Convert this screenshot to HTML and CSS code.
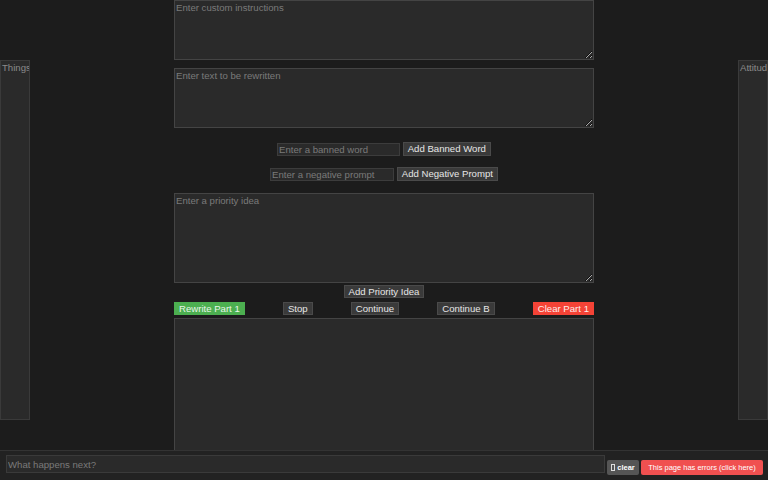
FILE: index.html
```html
<!DOCTYPE html>
<html>
<head>
<meta charset="utf-8">
<link rel="stylesheet" href="styles.css">
</head>
<body>
<div class="layout">
  <aside class="side"><div class="side-title">Things</div></aside>
  <main class="main">
    <textarea class="ta ta-short" placeholder="Enter custom instructions"></textarea>
    <textarea class="ta ta-short ta-gap" placeholder="Enter text to be rewritten"></textarea>
    <div class="row row-banned">
      <input class="inp" type="text" placeholder="Enter a banned word"> <button class="btn">Add Banned Word</button>
    </div>
    <div class="row row-neg">
      <input class="inp" type="text" placeholder="Enter a negative prompt"> <button class="btn">Add Negative Prompt</button>
    </div>
    <textarea class="ta ta-tall" placeholder="Enter a priority idea"></textarea>
    <div class="row row-prio"><button class="btn">Add Priority Idea</button></div>
    <div class="actions">
      <button class="btn btn-green">Rewrite Part 1</button>
      <button class="btn">Stop</button>
      <button class="btn">Continue</button>
      <button class="btn">Continue B</button>
      <button class="btn btn-red">Clear Part 1</button>
    </div>
    <div class="output"></div>
  </main>
  <aside class="side"><div class="side-title">Attitudes</div></aside>
</div>
<footer class="bottombar">
  <input class="next" type="text" placeholder="What happens next?">
  <button class="clear-btn"><span class="tofu"></span>clear</button>
  <button class="err-btn">This page has errors (click here)</button>
</footer>
</body>
</html>
```
FILE: styles.css
```css
html, body {
  margin: 0;
  padding: 0;
  height: 100%;
  overflow: hidden;
}
body {
  background: #1c1c1c;
  font-family: "Liberation Sans", Arial, sans-serif;
  font-size: 9.6px;
  color: #ddd;
}
.layout {
  display: grid;
  grid-template-columns: 30px 1fr 30px;
  height: 480px;
}
.side {
  margin-top: 60px;
  height: 360px;
  background: #2a2a2a;
  border: 1px solid #3a3a3a;
  box-sizing: border-box;
  overflow: hidden;
}
.side-title {
  color: #8a8a8a;
  font-size: 9.6px;
  padding: 1px 0 0 1px;
  white-space: nowrap;
}
.main {
  width: 420px;
  margin: 0 auto;
  display: flex;
  flex-direction: column;
}
.ta {
  display: block;
  width: 420px;
  box-sizing: border-box;
  background: #2a2a2a;
  border: 1px solid #444;
  color: #ddd;
  font-family: "Liberation Sans", Arial, sans-serif;
  font-size: 9.6px;
  padding: 1px 1px;
  margin: 0;
  resize: vertical;
  outline: none;
}
.ta::placeholder, .inp::placeholder, .next::placeholder {
  color: #7a7a7a;
}
.ta-short { height: 60px; }
.ta-gap { margin-top: 8px; }
.ta-tall { height: 90px; margin-top: 12px; }
.row {
  text-align: center;
  font-size: 9.6px;
  line-height: 14px;
  height: 14px;
}
.row-banned { margin-top: 14px; }
.row-neg { margin-top: 11px; }
.row-prio { margin-top: 2px; height: 13px; line-height: 13px; }
.inp {
  vertical-align: top;
  box-sizing: border-box;
  height: 13px;
  margin-top: 1px;
  padding: 0 1px;
  background: #2a2a2a;
  border: 1px solid #3c3c3c;
  color: #ddd;
  font-family: "Liberation Sans", Arial, sans-serif;
  font-size: 9.6px;
  line-height: 11px;
  outline: none;
}
.row-banned .inp { width: 123px; }
.row-neg .inp { width: 124px; }
.btn {
  vertical-align: top;
  box-sizing: border-box;
  height: 14px;
  padding: 0 4px;
  margin: 0;
  background: #3a3a3a;
  border: 1px solid #4a4a4a;
  color: #e6e6e6;
  font-family: "Liberation Sans", Arial, sans-serif;
  font-size: 9.6px;
  line-height: 12px;
  cursor: pointer;
}
.row-prio .btn { height: 13px; line-height: 11px; }
.actions {
  margin-top: 4px;
  display: flex;
  justify-content: space-between;
  height: 13px;
}
.actions .btn { height: 13px; line-height: 11px; }
.btn-green {
  background: #4caf50;
  border-color: #4caf50;
  color: #e8f5e9;
}
.btn-red {
  background: #f44336;
  border-color: #f44336;
  color: #fdecea;
}
.output {
  margin-top: 3px;
  height: 180px;
  background: #2a2a2a;
  border: 1px solid #444;
  box-sizing: border-box;
}
.bottombar {
  position: fixed;
  left: 0;
  right: 0;
  bottom: 0;
  height: 30px;
  box-sizing: border-box;
  background: #222;
  border-top: 1px solid #333;
  display: flex;
  align-items: flex-start;
  padding: 4px 5px 0 6px;
  gap: 2px;
}
.next {
  width: 599px;
  height: 18px;
  box-sizing: border-box;
  background: #2a2a2a;
  border: 1px solid #3a3a3a;
  color: #ddd;
  font-family: "Liberation Sans", Arial, sans-serif;
  font-size: 9.6px;
  padding: 0 1px;
  outline: none;
}
.clear-btn, .err-btn {
  margin-top: 5px;
  height: 15px;
  box-sizing: border-box;
  border: none;
  border-radius: 2px;
  font-family: "Liberation Sans", Arial, sans-serif;
  font-size: 7.5px;
  padding: 0 2px;
  line-height: 15px;
  white-space: nowrap;
  color: #fff;
}
.clear-btn {
  background: #555;
  width: 32px;
  font-weight: bold;
  display: flex;
  align-items: center;
  justify-content: center;
  gap: 2px;
}
.tofu {
  display: inline-block;
  width: 2px;
  height: 5px;
  border: 1px solid #ddd;
}
.err-btn {
  background: #f05050;
  width: 122px;
}
```
